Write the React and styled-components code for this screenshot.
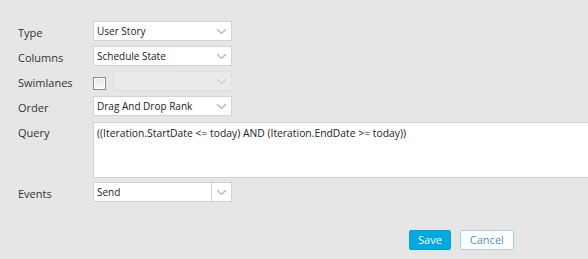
import React from 'react';
import styled, { createGlobalStyle } from 'styled-components';

const Global = createGlobalStyle`
  html, body {
    margin: 0;
    background: #e6e6e6;
    font-family: "Open Sans", "Liberation Sans", sans-serif;
  }
`;

const Page = styled.div`
  width: 588px;
  height: 259px;
  overflow: hidden;
  padding: 21px 0 0 18px;
  box-sizing: border-box;
`;

const Form = styled.div`
  display: grid;
  grid-template-columns: 75px auto;
  row-gap: 5px;
  align-items: center;
`;

const Label = styled.div`
  font-size: 11px;
  line-height: 15px;
  color: #333;
  align-self: ${(p) => (p.top ? 'start' : 'center')};
  padding-top: ${(p) => (p.top ? '4px' : '2px')};
`;

const Combo = styled.div`
  width: ${(p) => p.width || 139}px;
  height: 20px;
  box-sizing: border-box;
  display: flex;
  align-items: center;
  background: ${(p) => (p.disabled ? '#ebebeb' : '#fff')};
  border: 1px solid ${(p) => (p.disabled ? '#e0e0e0' : '#d3d3d3')};
  font-size: 10px;
  color: #222;
`;

const ComboText = styled.div`
  flex: 1;
  padding-left: 3px;
  white-space: nowrap;
`;

const Trigger = styled.div`
  width: 19px;
  height: 100%;
  display: flex;
  align-items: center;
  justify-content: center;
  border-left: ${(p) => (p.split ? '1px solid #d3d3d3' : 'none')};
`;

const SwimRow = styled.div`
  display: flex;
  align-items: flex-end;
  gap: 7px;
  height: 20px;
`;

const Check = styled.div`
  width: 13px;
  height: 13px;
  box-sizing: border-box;
  border: 1px solid #8a8a8a;
  background: linear-gradient(#e6e6e6, #fafafa);
  box-shadow: inset 0 0 0 1px #fff;
  margin-bottom: 1px;
`;

const Query = styled.div`
  width: 500px;
  height: 56px;
  margin-top: 1px;
  box-sizing: border-box;
  background: #fff;
  border: 1px solid #d3d3d3;
  font-size: 10.35px;
  color: #222;
  padding: 3px 0 0 3px;
`;

const EventsCell = styled.div`
  margin-top: -1px;
`;

const Footer = styled.div`
  display: flex;
  gap: 9px;
  margin: 28px 0 0 391px;
`;

const Button = styled.button`
  height: 20px;
  padding: 0 ${(p) => (p.primary ? '8px' : '9px')};
  font-family: inherit;
  font-size: 11px;
  border-radius: 2px;
  border: 1px solid ${(p) => (p.primary ? '#00a4dc' : '#9fd6ea')};
  background: ${(p) => (p.primary ? '#00a9e0' : '#fff')};
  color: ${(p) => (p.primary ? '#fff' : '#4a90c0')};
  line-height: 18px;
`;

const Chevron = ({ color = '#b8b8b8' }) => (
  <svg width="11" height="7" viewBox="0 0 11 7">
    <path d="M1 1.2 L5.5 5.2 L10 1.2" fill="none" stroke={color} strokeWidth="1.4" />
  </svg>
);

const Select = ({ value, split, disabled, width }) => (
  <Combo disabled={disabled} width={width}>
    <ComboText>{value}</ComboText>
    <Trigger split={split}>
      <Chevron color={disabled ? '#d0d0d0' : '#b8b8b8'} />
    </Trigger>
  </Combo>
);

export default function App() {
  return (
    <Page>
      <Global />
      <Form>
        <Label>Type</Label>
        <Select value="User Story" />
        <Label>Columns</Label>
        <Select value="Schedule State" />
        <Label>Swimlanes</Label>
        <SwimRow>
          <Check />
          <Select disabled width={119} />
        </SwimRow>
        <Label>Order</Label>
        <Select value="Drag And Drop Rank" />
        <Label top>Query</Label>
        <Query>((Iteration.StartDate &lt;= today) AND (Iteration.EndDate &gt;= today))</Query>
        <Label as={EventsCell}>Events</Label>
        <EventsCell>
          <Select value="Send" split />
        </EventsCell>
      </Form>
      <Footer>
        <Button primary>Save</Button>
        <Button>Cancel</Button>
      </Footer>
    </Page>
  );
}
